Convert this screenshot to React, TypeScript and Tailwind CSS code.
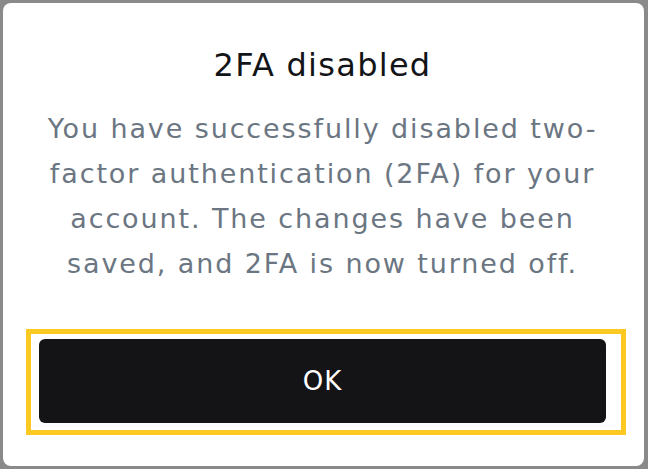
export default function App() {
  return (
    <div className="relative w-[648px] h-[469px] bg-[#8a8a8a] pt-[3px] pl-[3px]">
      <div
        className="w-[641px] h-[463px] bg-white rounded-lg flex flex-col items-center pl-[36px] pr-[38px]"
        style={{ fontFamily: '"DejaVu Sans", sans-serif' }}
      >
        <h2 className="mt-[42px] text-[32px] leading-[40px] tracking-[0.04em] font-medium text-[#131418]">2FA disabled</h2>
        <p className="mt-[21px] w-[560px] text-[27px] leading-[45px] tracking-[0.07em] text-[#6b7682] text-center">
          You have successfully disabled two-factor authentication (2FA) for your account. The changes have been saved, and 2FA is now turned off.
        </p>
        <button className="mt-auto mb-[43px] w-full h-[84px] rounded-md bg-[#141417] text-white text-[26px] tracking-[0.04em] font-medium">
          OK
        </button>
      </div>
      {/* highlight around the button */}
      <div className="absolute left-[26px] top-[329px] w-[600px] h-[106px] border-[5px] border-[#fcc923] pointer-events-none" />
    </div>
  );
}
